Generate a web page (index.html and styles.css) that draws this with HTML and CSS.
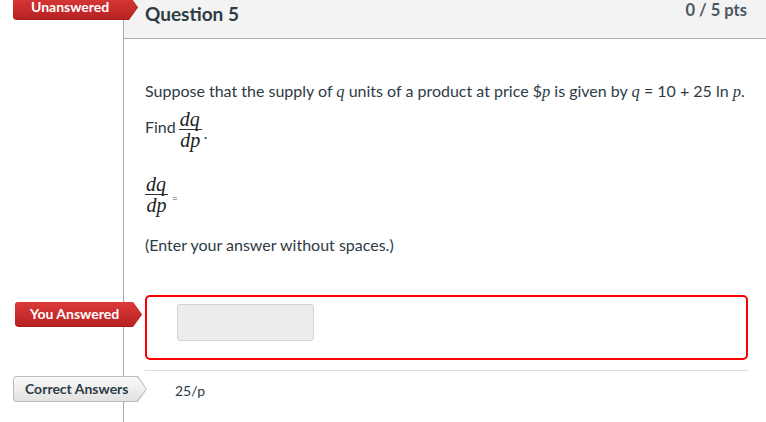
FILE: index.html
```html
<!DOCTYPE html>
<html lang="en">
<head>
<meta charset="utf-8">
<title>Question 5</title>
<link rel="stylesheet" href="styles.css">
</head>
<body>
<div class="quiz">
  <div class="gutter">
    <div class="tag tag-red tag-top"><span class="tag-inner">Unanswered</span></div>
  </div>
  <div class="header">
    <h2 class="q-title">Question 5</h2>
    <div class="q-pts">0 / 5 pts</div>
  </div>

  <div class="gutter"></div>
  <div class="qtext">
    <p class="line1">Suppose that the supply of <i class="mi">q</i> units of a product at price $<i class="mi">p</i> is given by <i class="mi">q</i> = 10 + 25 ln <i class="mi">p</i>.</p>
    <p class="line-find"><span class="find">Find</span><span class="frac"><span class="num">dq</span><span class="den">dp</span></span><span class="dot">.</span></p>
    <p class="line-eq"><span class="frac"><span class="num">dq</span><span class="den">dp</span></span><span class="eq">=</span></p>
    <p class="note">(Enter your answer without spaces.)</p>
  </div>

  <div class="gutter">
    <div class="tag tag-red tag-you"><span class="tag-inner">You Answered</span></div>
  </div>
  <div class="answer-cell">
    <div class="answer-box">
      <div class="answer-input"></div>
    </div>
  </div>

  <div class="gutter">
    <div class="tag tag-gray tag-correct"><span class="tag-inner">Correct Answers</span></div>
  </div>
  <div class="correct-cell">
    <div class="correct-text">25/p</div>
  </div>
</div>
</body>
</html>
```
FILE: styles.css
```css
* { box-sizing: border-box; }
html, body { margin: 0; padding: 0; background: #fff; }
body {
  font-family: Lato, "Open Sans", "Liberation Sans", sans-serif;
  color: #2d3b45;
  width: 766px;
  height: 422px;
  overflow: hidden;
}
.quiz {
  display: grid;
  grid-template-columns: 124px 1fr;
  grid-template-rows: auto auto auto 1fr;
  min-height: 422px;
}
.gutter {
  border-right: 1px solid #a9a9a9;
  position: relative;
  z-index: 1;
}
.header {
  height: 39px;
  background: #f3f3f3;
  border-bottom: 1px solid #acacac;
  display: flex;
  justify-content: space-between;
  align-items: flex-start;
  padding: 0 19px 0 21px;
}
.q-title {
  margin: 3px 0 0;
  font-size: 19px;
  font-weight: 700;
  line-height: 22px;
  color: #2d3b45;
}
.q-pts {
  margin-top: 1px;
  font-size: 16.5px;
  font-weight: 700;
  line-height: 18px;
  color: #4b5661;
}
.qtext {
  padding: 41px 18px 39px 21px;
  font-size: 16px;
  line-height: 22px;
}
.qtext p { margin: 0; }
.mi {
  font-family: "Liberation Serif", "DejaVu Serif", serif;
  font-style: italic;
  font-size: 16.5px;
  line-height: 1;
}
.line1 { white-space: nowrap; }
.line-find {
  display: flex;
  align-items: center;
  margin-top: 8px !important;
}
.find { margin-right: 3px; margin-bottom: 7px; }
.frac {
  display: inline-flex;
  flex-direction: column;
  align-items: stretch;
  font-family: "Liberation Serif", "DejaVu Serif", serif;
  font-style: italic;
  font-size: 20px;
  color: #222;
  text-align: center;
}
.num {
  line-height: 19px;
  padding: 0 2px 0 1px;
  border-bottom: 1px solid #333;
}
.den { line-height: 21px; }
.dot { margin-left: 2px; margin-top: 4px; }
.line-eq {
  display: flex;
  align-items: center;
  margin-top: 24px !important;
}
.eq {
  font-size: 10px;
  margin-left: 4px;
  margin-top: 4px;
  color: #555;
}
.note { margin-top: 18px !important; }

.answer-cell {
  padding: 0 18px 0 21px;
}
.answer-box {
  border: 2px solid #ff0000;
  border-radius: 5px;
  height: 65px;
  padding: 7px 0 0 30px;
}
.answer-input {
  width: 137px;
  height: 37px;
  background: #ececec;
  border: 1px solid #d4d4d4;
  border-radius: 3px;
}
.correct-cell {
  padding: 10px 18px 0 21px;
}
.correct-text {
  border-top: 1px solid #dedede;
  padding: 11px 0 0 30px;
  font-size: 14px;
  line-height: 18px;
  color: #2d3b45;
}

.tag {
  position: absolute;
  height: 26px;
  border-radius: 4px 0 0 4px;
  clip-path: polygon(0 0, calc(100% - 9px) 0, 100% 50%, calc(100% - 9px) 100%, 0 100%);
  font-size: 14px;
  font-weight: 700;
  line-height: 24px;
}
.tag-inner {
  display: block;
  height: 100%;
  padding-left: 15px;
  border-radius: 3px 0 0 3px;
  clip-path: polygon(0 0, calc(100% - 9px) 0, 100% 50%, calc(100% - 9px) 100%, 0 100%);
}
.tag-red {
  background: #a61c1c;
  padding: 0 0 1px 0;
}
.tag-red .tag-inner {
  background: linear-gradient(#dc3a3a, #b82222);
  color: #fff;
}
.tag-gray {
  background: #bdbdbd;
  padding: 1px;
}
.tag-gray .tag-inner {
  background: linear-gradient(#fafafa, #e2e2e2);
  color: #2d3b45;
  line-height: 24px;
  padding-left: 11px;
}
.tag-top {
  left: 13px;
  top: -5px;
  height: 25px;
  width: 125px;
}
.tag-top .tag-inner { padding-left: 18px; line-height: 23px; }
.tag-you {
  left: 15px;
  top: 7px;
  width: 127px;
  height: 25px;
}
.tag-you .tag-inner { line-height: 24px; }
.tag-correct {
  left: 13px;
  top: 16px;
  width: 134px;
}
```
